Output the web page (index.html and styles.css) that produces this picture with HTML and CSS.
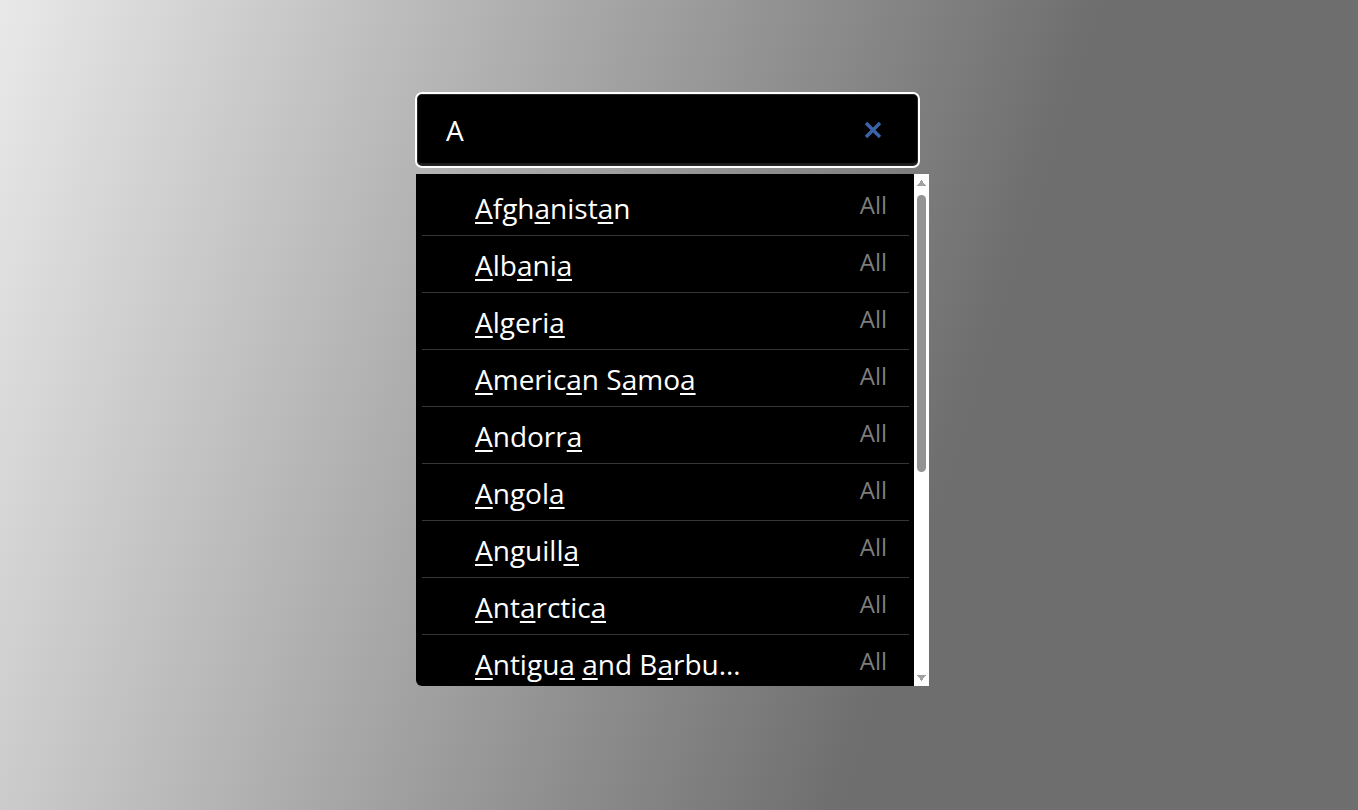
FILE: index.html
```html
<!DOCTYPE html>
<html lang="en">
<head>
<meta charset="UTF-8">
<title>Country search</title>
<link rel="stylesheet" href="styles.css">
</head>
<body>

<div class="picker">
    <!-- 输入框 -->
    <div class="search">
        <input class="query" id="query" type="text" value="A" spellcheck="false">
        <button class="clear" type="button" aria-label="Clear">
            <svg width="18" height="18" viewBox="0 0 18 18">
                <path d="M2 2 L16 16 M16 2 L2 16" stroke="#3b63a8" stroke-width="3.4" fill="none"/>
            </svg>
        </button>
    </div>
    <!-- 结果列表 + 滚动条 -->
    <div class="dropdown">
        <ul class="results" id="results"></ul>
        <div class="scroll">
            <div class="arrow up"></div>
            <div class="track"><div class="thumb"></div></div>
            <div class="arrow down"></div>
        </div>
    </div>
</div>

<script>
let countries = [
    "Afghanistan", "Albania", "Algeria", "American Samoa", "Andorra",
    "Angola", "Anguilla", "Antarctica", "Antigua and Barbuda", "Argentina",
    "Armenia", "Aruba", "Australia", "Austria", "Azerbaijan"
];
let visibleRows = 9; // 只渲染可见的行

let list = document.getElementById("results");
let q = document.getElementById("query").value.toLowerCase();

// 把匹配的字母加下划线
function mark(name) {
    let out = "";
    for (let ch of name) {
        out += ch.toLowerCase() === q ? '<span class="hit">' + ch + '</span>' : ch;
    }
    return out;
}

countries.slice(0, visibleRows).forEach(function (name) {
    let li = document.createElement("li");
    li.className = "row";
    li.innerHTML = '<span class="name">' + mark(name) + '</span><span class="tag">All</span>';
    list.appendChild(li);
});
</script>
</body>
</html>
```

FILE: styles.css
```css
/* 页面背景 */
body {
    margin: 0;
    height: 810px;
    background: linear-gradient(108deg, #e9e9e9 0%, #6e6e6e 68%, #6e6e6e 100%);
    font-family: "Open Sans", "Noto Sans", sans-serif;
    overflow: hidden;
}

.picker {
    width: 528px;
    margin: 0 auto;
    padding-top: 92px;
}

/* 搜索框 */
.search {
    width: 505px;
    height: 76px;
    box-sizing: border-box;
    border: 2px solid #fff;
    border-radius: 7px;
    background: #000;
    box-shadow: inset 0 0 0 1px #262626, inset 0 -3px 0 #1c1c1c;
    display: flex;
    align-items: center;
    padding: 0 36px 0 29px;
}

.query {
    flex: 1;
    background: transparent;
    border: none;
    outline: none;
    color: #fff;
    font-family: inherit;
    font-size: 28px;
    padding: 0;
}

.clear {
    background: none;
    border: none;
    padding: 0;
    width: 18px;
    height: 18px;
    display: flex;
}

/* 列表 */
.dropdown {
    display: flex;
    width: 513px;
    height: 512px;
    margin: 6px 0 0 1px;
}

.results {
    flex: 1;
    list-style: none;
    margin: 0;
    padding: 5px 5px 0 6px;
    background: #000;
    border-radius: 0 0 0 6px;
    overflow: hidden;
}

.row {
    height: 57px;
    box-sizing: border-box;
    border-bottom: 1px solid #363636;
    display: flex;
    justify-content: space-between;
    padding: 0 22px 0 53px;
}

.name {
    color: #fff;
    font-size: 28px;
    line-height: 32px;
    padding-top: 13px;
    max-width: 274px;
    white-space: nowrap;
    overflow: hidden;
    text-overflow: ellipsis;
}

.hit {
    text-decoration: underline;
    text-decoration-thickness: 2px;
    text-underline-offset: 3px;
}

.tag {
    color: #7d7d7d;
    font-size: 24px;
    line-height: 28px;
    padding-top: 12px;
}

/* 滚动条 */
.scroll {
    width: 15px;
    background: #fff;
    display: flex;
    flex-direction: column;
}

.arrow {
    height: 17px;
    background-repeat: no-repeat;
    background-position: center;
    background-size: 9px 6px;
}

.arrow.up {
    background-image: conic-gradient(from 143deg at 50% 0, #a0a0a0 74deg, transparent 0);
}

.arrow.down {
    background-image: conic-gradient(from -37deg at 50% 100%, #a0a0a0 74deg, transparent 0);
}

.track {
    flex: 1;
    padding: 4px 3px 0;
}

.thumb {
    height: 277px;
    border-radius: 5px;
    background: #939393;
}
```
